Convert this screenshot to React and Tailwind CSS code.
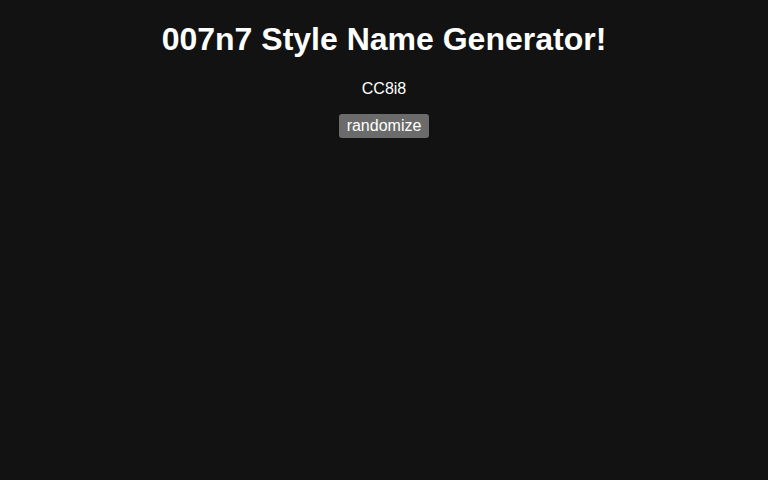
export default function App() {
  return (
    <div className="min-h-screen bg-[#121212] text-white text-center font-['Liberation_Sans',Arial,sans-serif]">
      <div className="pt-[21px] flex flex-col items-center">
        <h1 className="text-[32px] leading-[37px] font-bold">007n7 Style Name Generator!</h1>
        <p className="mt-[22px] text-base leading-[18px]">CC8i8</p>
        <button className="mt-4 px-2 py-[3px] text-base leading-[18px] bg-[#6b6b6b] rounded-[3px] text-white">
          randomize
        </button>
      </div>
    </div>
  );
}
